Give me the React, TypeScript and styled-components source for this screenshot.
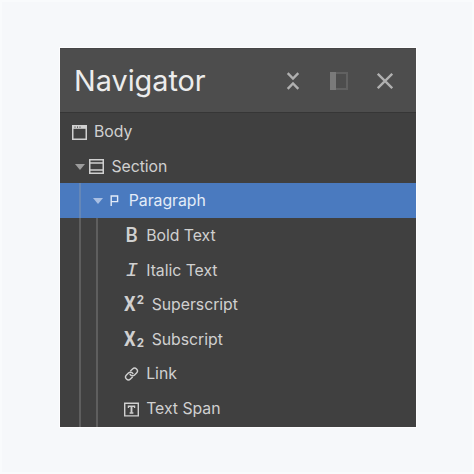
import React from "react";
import styled, { createGlobalStyle } from "styled-components";

const GlobalStyle = createGlobalStyle`
  *, *::before, *::after { box-sizing: border-box; }
  body { margin: 0; background: #f6f8fa; }
`;

const Page = styled.main`
  width: 474px;
  height: 474px;
  padding: 46px 56px 45px 58px;
  border: 2px solid #f9fbfc;
  background: #f6f8fa;
  overflow: hidden;
  font-family: Inter, "Liberation Sans", sans-serif;
`;

const Panel = styled.section`
  display: flex;
  flex-direction: column;
  width: 355.6px;
  height: 378.5px;
  background: #404040;
  color: #d0d0d0;
  box-shadow: 0 0 0 1px #fdfdfe;
  overflow: hidden;
`;

const Header = styled.header`
  display: flex;
  flex: none;
  align-items: center;
  height: 65px;
  padding: 0 21px 0 14px;
  background: #4d4d4d;
  border-top: 1px solid #464646;
  border-bottom: 1px solid #363636;
`;

const Title = styled.h1`
  flex: 1;
  margin: 0;
  font-size: 28.8px;
  font-weight: 400;
  line-height: 36px;
  color: #ececec;
`;

const Actions = styled.div`
  display: flex;
  align-items: center;
  gap: 26px;
`;

const IconButton = styled.button`
  display: flex;
  align-items: center;
  justify-content: center;
  width: 20px;
  height: 20px;
  padding: 0;
  border: 0;
  background: none;
  color: #b0b0b0;
`;

const Tree = styled.div`
  position: relative;
  flex: 1;
  padding-top: 1px;
`;

const Row = styled.div<{ $depth: number; $selected?: boolean }>`
  display: flex;
  align-items: center;
  height: 34.6px;
  padding-top: 2px;
  padding-left: ${(p) => p.$depth * 17.4}px;
  background: ${(p) => (p.$selected ? "#4a7abf" : "transparent")};
  color: ${(p) => (p.$selected ? "#e3ecf8" : "#d0d0d0")};
`;

const Toggle = styled.span<{ $selected?: boolean }>`
  display: flex;
  flex: none;
  width: 14px;
  margin-left: -2px;
  color: ${(p) => (p.$selected ? "#a9bfe3" : "#9c9c9c")};
`;

const IconSlot = styled.span<{ $wide?: boolean }>`
  display: flex;
  flex: none;
  justify-content: center;
  width: ${(p) => (p.$wide ? 20.5 : 15)}px;
  margin-right: 7px;
`;

const Label = styled.span`
  font-size: 15.8px;
  line-height: 20px;
  letter-spacing: -0.03px;
  white-space: nowrap;
`;

const Guide = styled.span<{ $x: number; $top: number }>`
  position: absolute;
  left: ${(p) => p.$x}px;
  top: ${(p) => p.$top}px;
  bottom: 0;
  width: 2px;
  background: rgba(165, 165, 165, 0.3);
`;

const Bold = styled.span`
  font: 500 19.5px/20px "Roboto", sans-serif;
`;

const Italic = styled.span`
  font: italic 400 21px/20px "Liberation Mono", monospace;
`;

const Script = styled.span`
  display: flex;
  width: 20.5px;
  height: 20px;
`;

const ScriptBase = styled.span`
  width: 12.5px;
  font: 700 19.6px/20px "Roboto", sans-serif;
  transform: scaleX(0.93);
  transform-origin: left;
`;

const ScriptDigit = styled.span<{ $sub?: boolean }>`
  margin-top: ${(p) => (p.$sub ? 6.5 : -2.5)}px;
  font: 700 11.5px/14px Inter, sans-serif;
`;

const Svg = ({ w = 15, h = 15, children }: { w?: number; h?: number; children: React.ReactNode }) => (
  <svg width={w} height={h} viewBox={`0 0 ${w} ${h}`} fill="none" stroke="currentColor" strokeWidth="1.5">
    {children}
  </svg>
);

const BodyIcon = () => (
  <Svg>
    <path d="M.75 .75h13.5v13.5H.75z" />
    <path d="M1 2.2h13" strokeWidth="3.2" />
    <path d="M2.5 2.1h1M5 2.1h1M7.5 2.1h1" stroke="#404040" strokeWidth="1.2" />
  </Svg>
);

const SectionIcon = () => (
  <Svg>
    <path d="M.75.75h13.5v13.5H.75zM1 4h13M1 11h13" />
  </Svg>
);

const ParagraphIcon = () => (
  <Svg>
    <path d="M4.2 11.9v-9.9h6.4v5.6H4.2" strokeWidth="1.4" />
  </Svg>
);

const LinkIcon = () => (
  <Svg w={16} h={16}>
    <g transform="rotate(-45 8 8)" strokeLinecap="round">
      <path d="M6.2 11H3.4a3 3 0 0 1 0-6h3a3 3 0 0 1 2.9 3.8" />
      <path d="M9.8 5h2.8a3 3 0 0 1 0 6h-3a3 3 0 0 1-2.9-3.8" />
    </g>
  </Svg>
);

const SpanIcon = () => (
  <Svg w={16} h={15}>
    <path d="M.75.75h14.5v13.5H.75z" />
    <path d="M4.7 6V4h6.6v2M6 11.2h4" strokeWidth="1.4" />
    <path d="M8 4v7" strokeWidth="2" />
  </Svg>
);

const Arrow = () => (
  <svg width="10" height="6" viewBox="0 0 10 6">
    <path d="M0 0h10L5 6z" fill="currentColor" />
  </svg>
);

type Item = {
  label: string;
  depth: number;
  icon: React.ReactNode;
  open?: boolean;
  selected?: boolean;
  wide?: boolean;
};

const items: Item[] = [
  { label: "Body", depth: 0, icon: <BodyIcon /> },
  { label: "Section", depth: 1, icon: <SectionIcon />, open: true },
  { label: "Paragraph", depth: 2, icon: <ParagraphIcon />, open: true, selected: true },
  { label: "Bold Text", depth: 3, icon: <Bold>B</Bold> },
  { label: "Italic Text", depth: 3, icon: <Italic>I</Italic> },
  {
    label: "Superscript",
    depth: 3,
    icon: <Script><ScriptBase>X</ScriptBase><ScriptDigit>2</ScriptDigit></Script>,
    wide: true,
  },
  {
    label: "Subscript",
    depth: 3,
    icon: <Script><ScriptBase>X</ScriptBase><ScriptDigit $sub>2</ScriptDigit></Script>,
    wide: true,
  },
  { label: "Link", depth: 3, icon: <LinkIcon /> },
  { label: "Text Span", depth: 3, icon: <SpanIcon /> },
];

export default function App() {
  return (
    <Page>
      <GlobalStyle />
      <Panel>
        <Header>
          <Title>Navigator</Title>
          <Actions>
            <IconButton aria-label="Collapse all">
              <svg width="14" height="18" viewBox="0 0 14 18" fill="none" stroke="currentColor" strokeWidth="2.4">
                <path d="M1.7 1.2 7 6.5l5.3-5.3M1.7 16.8 7 11.5l5.3 5.3" />
              </svg>
            </IconButton>
            <IconButton aria-label="Dock panel">
              <svg width="18" height="18" viewBox="0 0 18 18" fill="none">
                <path d="M0 0h6v18H0z" fill="#7a7a7a" />
                <path d="M6 1h11v16H6" stroke="#616161" strokeWidth="2" />
              </svg>
            </IconButton>
            <IconButton aria-label="Close">
              <svg width="16" height="16" viewBox="0 0 16 16" fill="none" stroke="currentColor" strokeWidth="2.3">
                <path d="m.8.8 14.4 14.4M15.2.8.8 15.2" />
              </svg>
            </IconButton>
          </Actions>
        </Header>
        <Tree>
          {items.map((item) => (
            <Row key={item.label} $depth={item.depth} $selected={item.selected}>
              <Toggle $selected={item.selected}>{item.open && <Arrow />}</Toggle>
              <IconSlot $wide={item.wide}>{item.icon}</IconSlot>
              <Label>{item.label}</Label>
            </Row>
          ))}
          <Guide $x={19} $top={70} />
          <Guide $x={36} $top={105} />
        </Tree>
      </Panel>
    </Page>
  );
}
